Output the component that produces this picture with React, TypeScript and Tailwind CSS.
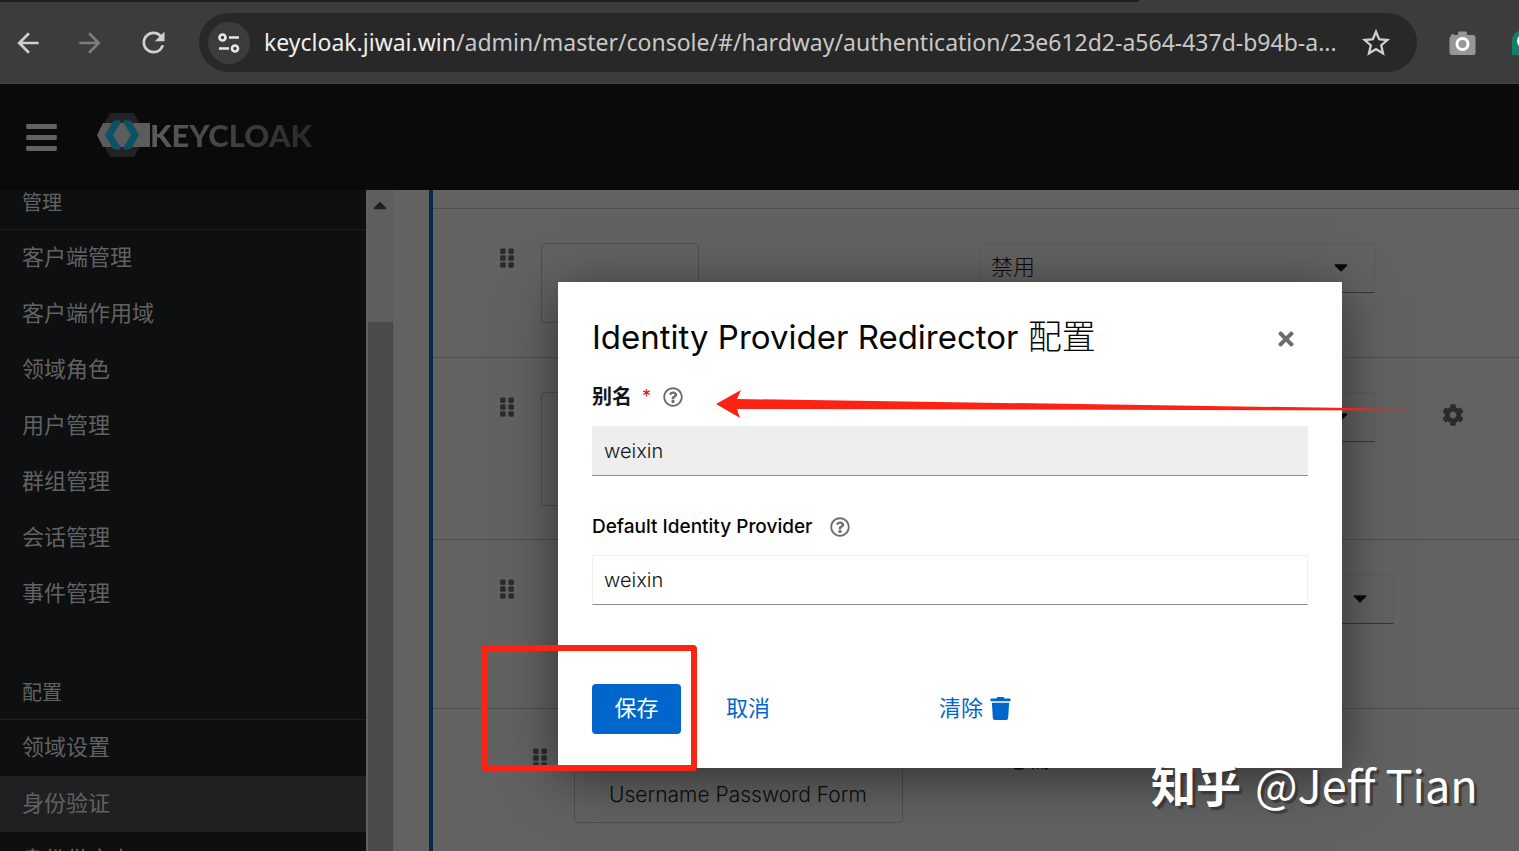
import { useState } from "react";
import { MdArrowBack, MdArrowForward, MdOutlineStarBorder, MdRefresh } from "react-icons/md";
import {
  FaBars,
  FaCaretDown,
  FaCaretUp,
  FaCog,
  FaGripVertical,
  FaRegQuestionCircle,
  FaTimes,
  FaTrash,
} from "react-icons/fa";

const manageItems = [
  "客户端管理",
  "客户端作用域",
  "领域角色",
  "用户管理",
  "群组管理",
  "会话管理",
  "事件管理",
];

const configureItems = ["领域设置", "身份验证", "身份供应商"];

function BrowserBar() {
  return (
    <div className="shrink-0 bg-[#3c3c3c]">
      <div className="h-[2px] w-3/4 bg-[#1f1f1f]" />
      <div className="flex h-[82px] items-center border-b border-[#444444] pl-3">
        <button aria-label="Back" className="text-[#d0d0d0]">
          <MdArrowBack size={32} />
        </button>
        <button aria-label="Forward" className="ml-[30px] text-[#7d7d7d]">
          <MdArrowForward size={32} />
        </button>
        <button aria-label="Reload" className="ml-[31px] text-[#d0d0d0]">
          <MdRefresh size={33} />
        </button>
        <div className="ml-[29px] flex h-[59px] min-w-0 flex-1 items-center rounded-full bg-[#282828] pr-6 pl-[9px]">
          <button
            aria-label="Site information"
            className="flex size-[42px] shrink-0 items-center justify-center rounded-full bg-[#3c3c3c]"
          >
            <svg width="22" height="20" viewBox="0 0 22 20" fill="none" stroke="#e6e6e6" strokeWidth="2.7">
              <circle cx="4.500" cy="4.500" r="3" />
              <path d="M11 4.500h10M1 15.500h10" />
              <circle cx="17" cy="15.500" r="3" />
            </svg>
          </button>
          <div className="ml-[14px] min-w-0 flex-1 overflow-hidden font-['Noto_Sans',sans-serif] text-[23px] whitespace-nowrap text-[#c7c7c7]">
            <span className="text-[#eeeeee]">keycloak.jiwai.win</span>
            /admin/master/console/#/hardway/authentication/23e612d2-a564-437d-b94b-a...
          </div>
          <button aria-label="Bookmark" className="ml-2 shrink-0 text-[#d0d0d0]">
            <MdOutlineStarBorder size={34} />
          </button>
        </div>
        <button aria-label="Screenshot" className="ml-8 shrink-0">
          <svg width="27" height="24" viewBox="0 0 27 24">
            <path
              d="M2 5q1-4 3-1h4V2q0-1.500 1.500-1.500h6Q18 .5 18 2v2h6q2.500 0 2.500 2.500v15Q26.500 24 24 24H3Q.5 24 .5 21.500v-14Q.5 5.500 2 5z"
              fill="#979797"
            />
            <circle cx="13.500" cy="13" r="5.500" fill="#979797" stroke="#fff" strokeWidth="3" />
          </svg>
        </button>
        <button aria-label="Extension" className="ml-9 h-[25px] w-[7px] shrink-0 overflow-hidden">
          <svg width="25" height="25" viewBox="0 0 25 25">
            <path d="M0 25V10Q1 1 11 0h14v25z" fill="#11806a" />
            <circle cx="12" cy="11" r="7" fill="#fff" />
          </svg>
        </button>
      </div>
    </div>
  );
}

function Logo() {
  return (
    <a href="#" aria-label="Keycloak" className="flex items-center pb-1">
      <svg width="53" height="44" viewBox="0 0 53 44">
        <path d="M13 0h24l12 22-12 22H13L1 22z" fill="#222222" />
        <path d="M6 10h47v24H6L0 22z" fill="#5c5c5c" />
        <path d="M16 8l6-1 2 2-8 13 8 13-2 2-6-1-8-14z" fill="#0c5266" />
        <path d="M34 8l-6-1-2 2 8 13-8 13 2 2 6-1 8-14z" fill="#0c5266" />
      </svg>
      <span className="bg-gradient-to-r from-[#5c5c5c] to-[#282828] bg-clip-text font-[Lato,sans-serif] text-[31px] leading-8 font-black text-transparent">
        KEYCLOAK
      </span>
    </a>
  );
}

function NavSection({ title, items, current }: { title: string; items: string[]; current?: string }) {
  return (
    <section>
      <h2 className="h-[55px] border-b border-[#1e1f20] pt-[14px] pl-[22px] text-xl leading-7 text-[#626262]">
        {title}
      </h2>
      <ul>
        {items.map((item) => (
          <li key={item}>
            <a
              href="#"
              className={`flex h-14 items-center pb-0.5 pl-[22px] text-[22px] ${item === current ? "bg-[#1f2021]" : ""}`}
            >
              {item}
            </a>
          </li>
        ))}
      </ul>
    </section>
  );
}

function Grip() {
  return (
    <button
      aria-label="Drag"
      className="mt-1 flex h-[22px] w-[108px] shrink-0 items-center justify-center pl-10 text-[#2b2b2b]"
    >
      <FaGripVertical size={22} />
    </button>
  );
}

function Requirement({ label, wide }: { label: string; wide?: boolean }) {
  return (
    <div
      className={`relative h-[50px] shrink-0 border border-[#5b5b5b] border-b-[#363636] ${wide ? "w-[414px]" : "w-[395px]"}`}
    >
      <select
        aria-label="Requirement"
        className="size-full appearance-none pb-0.5 pl-[10px] text-[22px] font-light text-[#0c0c0c]"
      >
        <option>{label}</option>
      </select>
      <FaCaretDown size={22} className="pointer-events-none absolute top-3 right-[22px] text-[#080808]" />
    </div>
  );
}

function Flow() {
  return (
    <main className="min-w-0 flex-1 overflow-hidden pl-[35px]">
      <ul className="h-full border-l-4 border-[#06294f] pt-[18px]">
        <li className="flex h-[149px] items-start border-t border-[#4e4e4e] pt-[34px]">
          <Grip />
          <div className="h-20 w-[158px] shrink-0 rounded-sm border border-[#4e4e4e]" />
          <div className="w-[281px] shrink-0" />
          <Requirement label="禁用" />
        </li>
        <li className="flex h-[182px] items-start border-t border-[#4e4e4e] pt-[34px]">
          <Grip />
          <div className="h-[114px] w-[158px] shrink-0 rounded-sm border border-[#4e4e4e]" />
          <div className="w-[281px] shrink-0" />
          <Requirement label="可选" />
          <button aria-label="Settings" className="mt-3 ml-[67px] text-[#2b2b2b]">
            <FaCog size={22} />
          </button>
        </li>
        <li className="flex h-[169px] items-start border-t border-[#4e4e4e] pt-[34px]">
          <Grip />
          <div className="w-[439px] shrink-0" />
          <Requirement label="可选" wide />
        </li>
        <li className="flex items-start border-t border-[#4e4e4e] pt-[34px] pl-[33px]">
          <Grip />
          <div className="flex h-20 w-[329px] shrink-0 items-end rounded-sm border border-[#4e4e4e] pb-3 pl-[34px] text-[21px] font-light text-[#0c0c0c]">
            Username Password Form
          </div>
          <span className="ml-[104px] text-[22px] text-[#121212]">必需</span>
        </li>
      </ul>
    </main>
  );
}

function HelpButton({ topic }: { topic: string }) {
  return (
    <button type="button" aria-label={`Help: ${topic}`} className="text-[#6a6e73]">
      <FaRegQuestionCircle size={20} />
    </button>
  );
}

function ConfigDialog() {
  const [alias, setAlias] = useState("weixin");
  const [provider, setProvider] = useState("weixin");

  return (
    <form
      role="dialog"
      aria-labelledby="dialog-title"
      className="absolute top-[282px] right-[177px] left-[558px] bg-white px-[34px] pt-[33px] pb-[34px] text-[#151515] shadow-[0_10px_50px_rgba(0,0,0,0.5)]"
    >
      <div className="flex h-11 items-center justify-between pr-[11px]">
        <h1 id="dialog-title" className="text-[33px] leading-[44px] text-[#060606]">
          Identity Provider Redirector <span className="text-[34px] font-light">配置</span>
        </h1>
        <button type="button" aria-label="Close" className="mt-1 text-[#6a6e73]">
          <FaTimes size={22} />
        </button>
      </div>

      <div className="mt-5 flex h-9 items-center">
        <label htmlFor="alias" className="text-xl font-bold">
          别名
        </label>
        <span className="mr-3 ml-[10px] text-lg text-[#c9190b]">*</span>
        <HelpButton topic="别名" />
      </div>
      <input
        id="alias"
        value={alias}
        onChange={(e) => setAlias(e.target.value)}
        className="mt-[11px] block h-[50px] w-full border-b border-[#8a8d90] bg-[#eeeeee] px-3 text-xl font-light"
      />

      <div className="mt-[33px] flex h-9 items-center gap-[18px]">
        <label htmlFor="provider" className="text-[19px] font-medium text-[#060606]">
          Default Identity Provider
        </label>
        <HelpButton topic="Default Identity Provider" />
      </div>
      <input
        id="provider"
        value={provider}
        onChange={(e) => setProvider(e.target.value)}
        className="mt-[10px] block h-[50px] w-full border border-[#f0f0f0] border-b-[#8a8d90] px-[11px] text-xl font-light"
      />

      <div className="mt-[79px] flex h-[50px] items-center text-[22px] text-[#0066cc]">
        <button type="button" className="h-full w-[89px] rounded bg-[#0066cc] pb-0.5 text-white">
          保存
        </button>
        <button type="button" className="ml-[45px] pb-0.5">
          取消
        </button>
        <button type="button" className="ml-[169px] flex items-center gap-[6px] pb-0.5">
          清除 <FaTrash size={23} />
        </button>
      </div>
    </form>
  );
}

function Annotations() {
  return (
    <>
      <svg
        className="pointer-events-none absolute top-[388px] left-[716px]"
        width="700"
        height="32"
        viewBox="0 0 700 32"
      >
        <defs>
          <linearGradient id="fade" x1="0" x2="1">
            <stop offset="0.9" stopColor="#fb2314" />
            <stop offset="1" stopColor="#fb2314" stopOpacity="0.1" />
          </linearGradient>
        </defs>
        <path d="M0 16L25 2l-4 9L700 21v1.500L21 21l3 9z" fill="url(#fade)" />
      </svg>
      <div className="pointer-events-none absolute top-[645px] left-[481px] h-[126px] w-[216px] rounded border-[6px] border-[#fb2314]" />
      <div className="absolute top-[754px] left-[1151px] flex items-center gap-[14px] font-['Noto_Sans_CJK_SC',sans-serif] text-[45px] leading-[60px] whitespace-nowrap text-white [text-shadow:3px_3px_1px_rgba(50,50,50,0.8)]">
        <span className="font-bold">知乎</span>
        <span>@Jeff Tian</span>
      </div>
    </>
  );
}

export default function App() {
  return (
    <div className="relative flex h-screen flex-col overflow-hidden bg-[#626262] font-[Inter,'Noto_Sans_CJK_SC',sans-serif]">
      <BrowserBar />
      <header className="flex h-[106px] shrink-0 items-center gap-[38px] bg-[#0a0a0a] pl-6">
        <button aria-label="Menu" className="text-[#626262]">
          <FaBars size={35} />
        </button>
        <Logo />
      </header>
      <div className="flex min-h-0 flex-1">
        <nav className="w-[366px] shrink-0 overflow-hidden bg-[#0e0f10] text-[#626262]">
          <div className="-mt-[15px]">
            <NavSection title="管理" items={manageItems} />
          </div>
          <div className="mt-[43px]">
            <NavSection title="配置" items={configureItems} current="身份验证" />
          </div>
        </nav>
        <div className="flex w-7 shrink-0 flex-col items-center bg-[#5e5e5e] text-[#1f1f1f]">
          <FaCaretUp size={22} className="mt-1" />
          <div className="mt-[106px] w-[25px] flex-1 bg-[#4a4a4a]" />
        </div>
        <Flow />
      </div>
      <ConfigDialog />
      <Annotations />
    </div>
  );
}
